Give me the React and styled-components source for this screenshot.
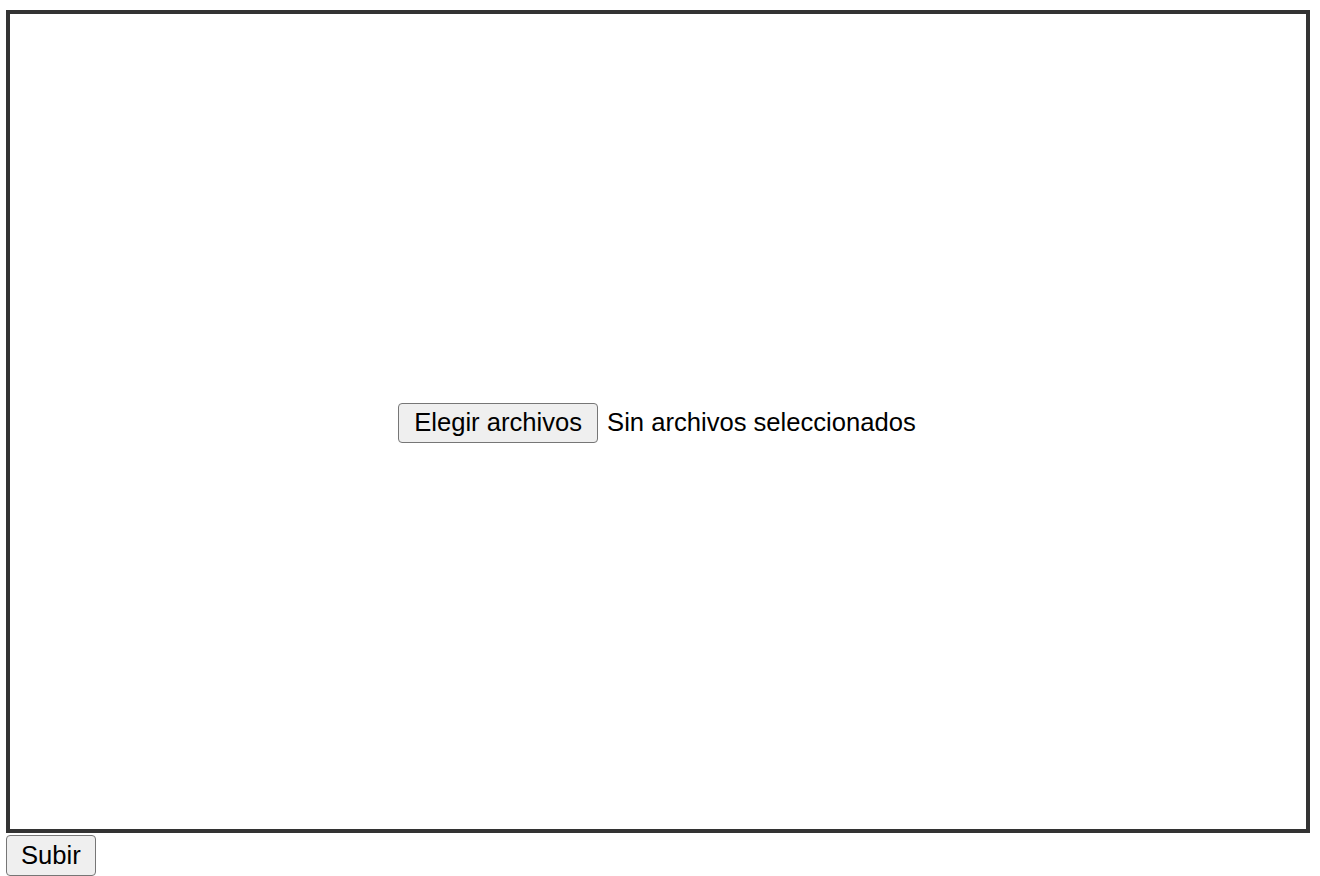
import React, { useState } from 'react';
import styled, { createGlobalStyle } from 'styled-components';

const GlobalStyle = createGlobalStyle`
	html, body {
		margin: 0;
		background: #fff;
	}
	body {
		padding: 10px 6px 0;
		font-family: 'Liberation Sans', Arial, sans-serif;
		color: #000;
	}
`;

const DropZone = styled.div`
	box-sizing: border-box;
	width: 1304px;
	height: 823px;
	border: 4px solid #333;
	display: flex;
	align-items: center;
	justify-content: center;
`;

const Picker = styled.label`
	display: flex;
	align-items: center;
	gap: 9px;
	font-size: 25.6px;
	margin-left: -2px;
	margin-top: 2px;
`;

const HiddenInput = styled.input`
	display: none;
`;

const FakeButton = styled.span`
	box-sizing: border-box;
	display: inline-flex;
	align-items: center;
	justify-content: center;
	height: 40px;
	padding: 0 15px;
	background: #efefef;
	border: 1px solid #767676;
	border-radius: 4px;
	font-size: 25.6px;
	cursor: default;
`;

const Button = styled.button`
	box-sizing: border-box;
	display: block;
	margin-top: 2px;
	height: 41px;
	padding: 0 14px;
	background: #efefef;
	border: 1px solid #767676;
	border-radius: 4px;
	font-family: 'Liberation Sans', Arial, sans-serif;
	font-size: 25.6px;
	color: #000;
`;

const App = () => {
	const [files, setFiles] = useState([]);

	const label = files.length === 0
		? 'Sin archivos seleccionados'
		: files.length === 1 ? files[0].name : files.length + ' archivos';

	return (
		<>
			<GlobalStyle />
			<form onSubmit={(e) => e.preventDefault()}>
				<DropZone>
					<Picker>
						<HiddenInput
							type='file'
							multiple
							onChange={(e) => setFiles(Array.from(e.target.files))}
						/>
						<FakeButton>Elegir archivos</FakeButton>
						<span>{label}</span>
					</Picker>
				</DropZone>
				<Button type='submit'>Subir</Button>
			</form>
		</>
	);
};

export default App;
